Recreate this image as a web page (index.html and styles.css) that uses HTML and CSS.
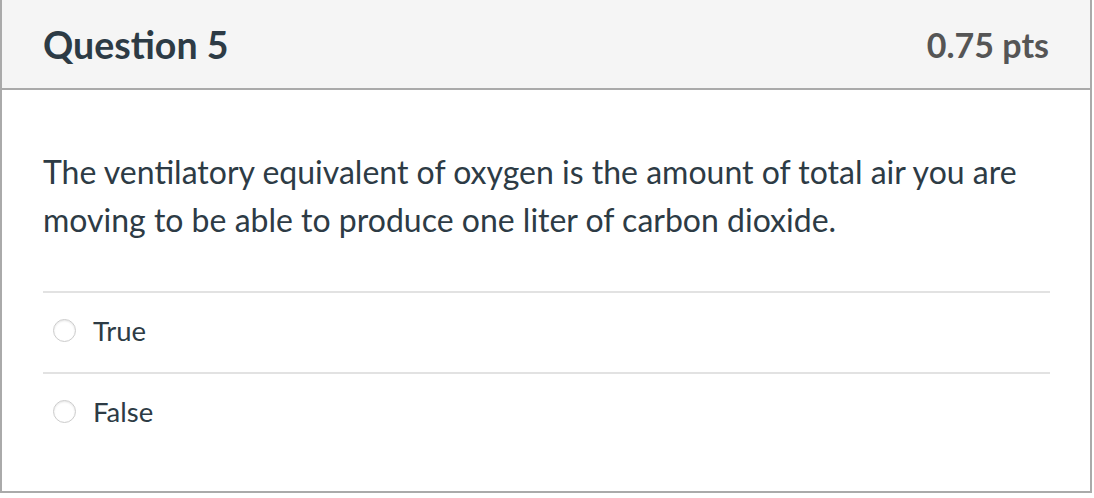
FILE: index.html
```html
<!DOCTYPE html>
<html>
<head>
<meta charset="utf-8">
<link rel="stylesheet" href="styles.css">
</head>
<body>
<div class="question">
  <div class="header">
    <h2 class="title">Question 5</h2>
    <span class="pts">0.75 pts</span>
  </div>
  <div class="content">
    <p class="text">The ventilatory equivalent of oxygen is the amount of total air you are moving to be able to produce one liter of carbon dioxide.</p>
    <div class="answers">
      <label class="answer"><span class="radio"></span><span class="label">True</span></label>
      <label class="answer"><span class="radio"></span><span class="label">False</span></label>
    </div>
  </div>
</div>
</body>
</html>
```
FILE: styles.css
```css
html, body {
  margin: 0;
  padding: 0;
  background: #fff;
}
body {
  font-family: Lato, "Noto Sans", sans-serif;
  color: #2d3b45;
}
.question {
  width: 1088px;
  height: 491px;
  border: 2px solid #aaaaaa;
  border-top: none;
  display: flex;
  flex-direction: column;
}
.header {
  height: 88px;
  background: #f5f5f5;
  border-bottom: 2px solid #aaaaaa;
  display: flex;
  align-items: center;
  justify-content: space-between;
  padding: 0 41px 0 41px;
}
.title {
  margin: 0;
  font-size: 37.5px;
  font-weight: 700;
  color: #2d3b45;
}
.pts {
  font-size: 34px;
  font-weight: 700;
  color: #555555;
}
.content {
  padding: 58px 40px 0 41px;
}
.text {
  margin: 0;
  font-size: 32px;
  line-height: 48px;
}
.answers {
  margin-top: 47px;
}
.answer {
  display: flex;
  align-items: center;
  height: 74px;
  padding-bottom: 5px;
  border-top: 2px solid #e2e2e2;
}
.radio {
  width: 21px;
  height: 21px;
  border-radius: 50%;
  border: 1px solid #cccccc;
  box-shadow: inset 0 1px 2px rgba(0,0,0,0.1);
  background: #fff;
  margin-left: 10px;
  margin-right: 17px;
}
.label {
  font-size: 27.5px;
}
```
